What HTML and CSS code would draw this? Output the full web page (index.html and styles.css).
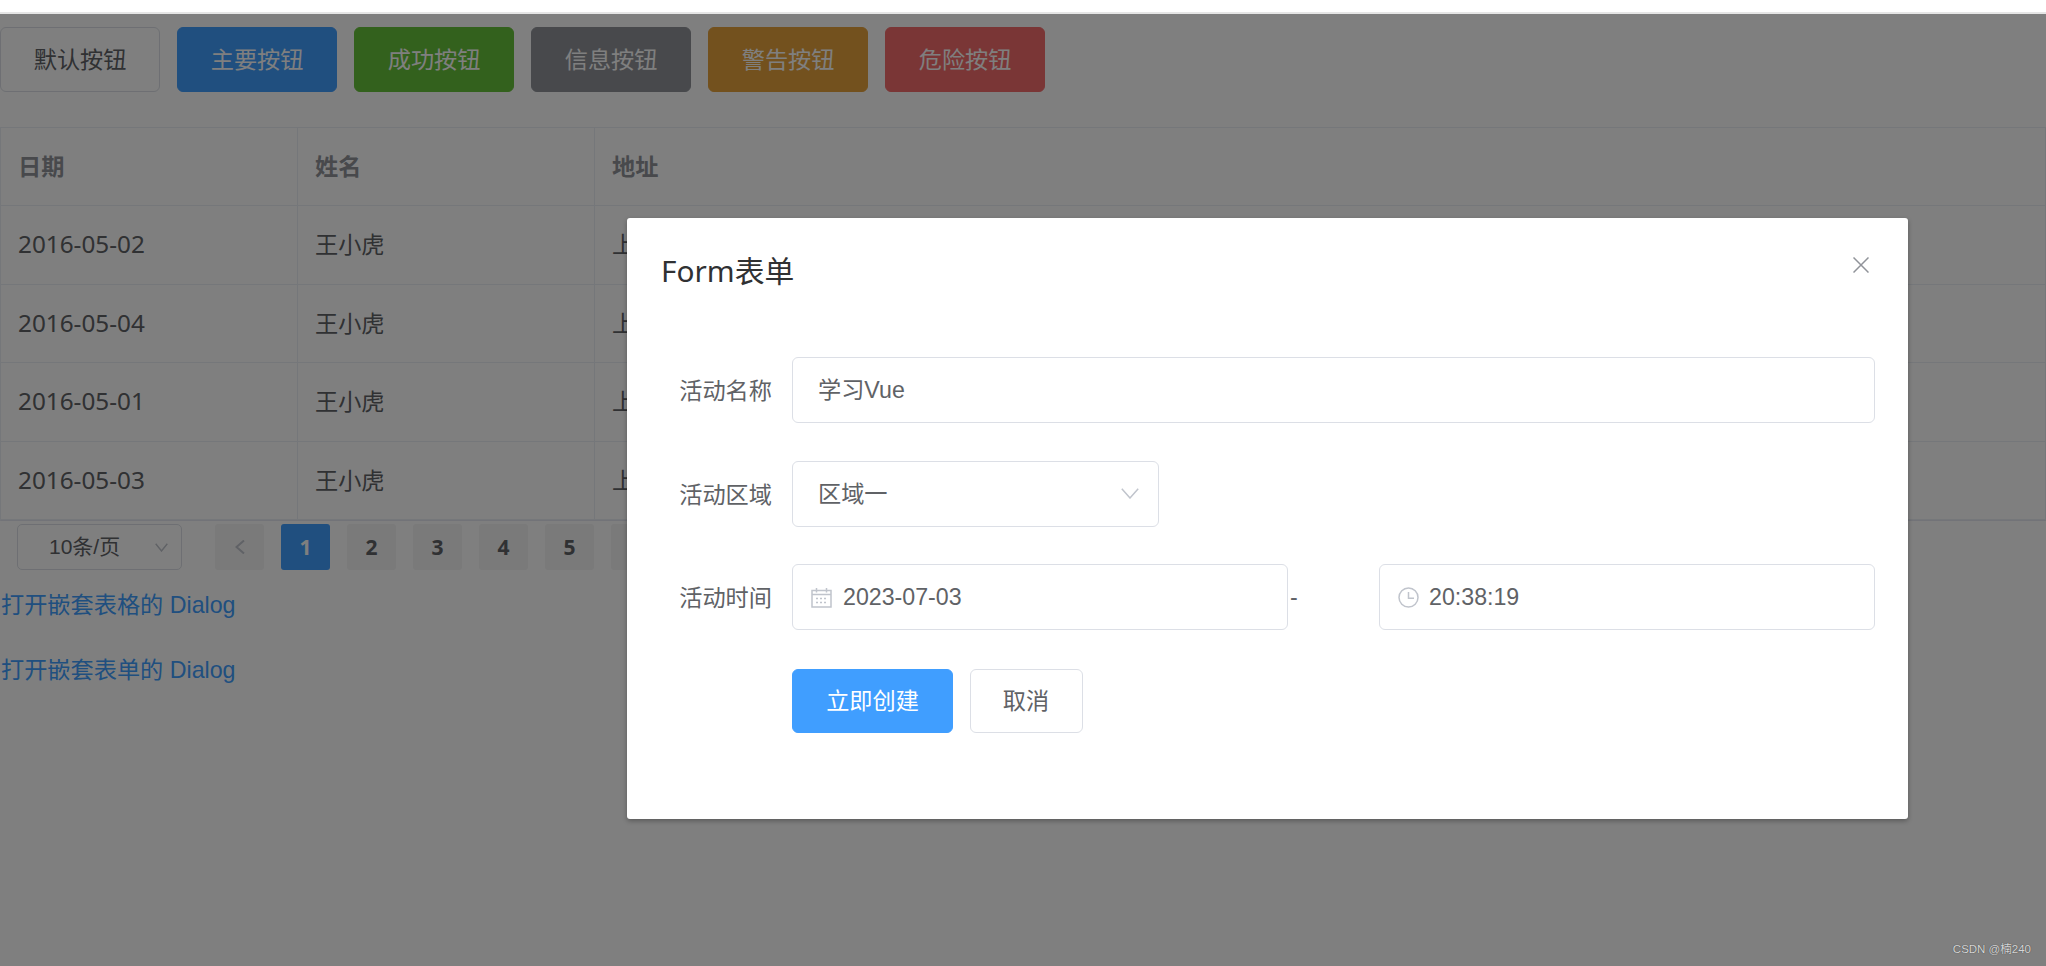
FILE: index.html
```html
<!DOCTYPE html>
<html lang="zh-CN">
<head>
<meta charset="utf-8">
<title>Form表单</title>
<link rel="stylesheet" href="styles.css">
</head>
<body>
<div class="topbar"></div>
<main class="page">
  <div class="content">
    <div class="btn-row">
      <button class="btn">默认按钮</button>
      <button class="btn btn-primary">主要按钮</button>
      <button class="btn btn-success">成功按钮</button>
      <button class="btn btn-info">信息按钮</button>
      <button class="btn btn-warning">警告按钮</button>
      <button class="btn btn-danger">危险按钮</button>
    </div>
    <table class="table">
      <colgroup><col class="col-date"><col class="col-name"><col></colgroup>
      <thead>
        <tr><th>日期</th><th>姓名</th><th>地址</th></tr>
      </thead>
      <tbody>
        <tr><td class="date">2016-05-02</td><td>王小虎</td><td>上海市普陀区金沙江路 1518 弄</td></tr>
        <tr><td class="date">2016-05-04</td><td>王小虎</td><td>上海市普陀区金沙江路 1517 弄</td></tr>
        <tr><td class="date">2016-05-01</td><td>王小虎</td><td>上海市普陀区金沙江路 1519 弄</td></tr>
        <tr><td class="date">2016-05-03</td><td>王小虎</td><td>上海市普陀区金沙江路 1516 弄</td></tr>
      </tbody>
    </table>
    <nav class="pager">
      <div class="page-size">
        <span>10条/页</span>
        <svg class="page-size-arrow" viewBox="0 0 13 9"><path d="M.7.7 6.500 8 12.300.7"/></svg>
      </div>
      <div class="page-list">
        <span class="page-btn page-prev"><svg class="prev-icon" viewBox="0 0 10 14"><path d="M9 .5 1.500 7 9 13.500"/></svg></span>
        <span class="page-btn page-active">1</span>
        <span class="page-btn">2</span>
        <span class="page-btn">3</span>
        <span class="page-btn">4</span>
        <span class="page-btn">5</span>
        <span class="page-btn">6</span>
      </div>
    </nav>
    <div class="links">
      <a class="link">打开嵌套表格的 Dialog</a>
      <a class="link">打开嵌套表单的 Dialog</a>
    </div>
  </div>

  <div class="overlay">
    <section class="dialog">
      <header class="dialog-header">
        <h2 class="dialog-title">Form表单</h2>
        <svg class="dialog-close" viewBox="0 0 16 16"><path d="M.5.500 15.500 15.500M15.500.500.500 15.500"/></svg>
      </header>
      <form class="form">
        <div class="form-row">
          <label class="form-label">活动名称</label>
          <div class="field field-full"><span class="field-text">学习Vue</span></div>
        </div>
        <div class="form-row">
          <label class="form-label">活动区域</label>
          <div class="field field-select">
            <span class="field-text">区域一</span>
            <svg class="select-arrow" viewBox="0 0 18 11"><path d="M.8.8 9 10 17.200.8"/></svg>
          </div>
        </div>
        <div class="form-row">
          <label class="form-label">活动时间</label>
          <div class="date-grid">
            <div class="field field-icon">
              <svg class="field-svg" viewBox="0 0 21 21"><path d="M1 3.500h19v16.500H1zM1 7.500h19M5.500 1v4.500M15.500 1v4.500"/><path class="dots" d="M5 11.500h11M5 15.500h11"/></svg>
              <span>2023-07-03</span>
            </div>
            <span class="date-sep">-</span>
            <div class="field field-icon field-time">
              <svg class="field-svg" viewBox="0 0 21 21"><circle cx="10.500" cy="10.500" r="9.500"/><path d="M10.500 5v6.200h5.500"/></svg>
              <span>20:38:19</span>
            </div>
          </div>
        </div>
        <div class="form-row form-actions">
          <button class="btn btn-primary btn-create" type="button">立即创建</button>
          <button class="btn btn-cancel" type="button">取消</button>
        </div>
      </form>
    </section>
  </div>
  <div class="watermark">CSDN @楠240</div>
</main>
</body>
</html>
```
FILE: styles.css
```css
* { box-sizing: border-box; }
html, body { margin: 0; padding: 0; height: 966px; overflow: hidden; background: #fff; }
body { font-family: "Noto Sans", "Noto Sans CJK SC", sans-serif; font-size: 23.200px; color: #606266; }

.topbar { height: 14px; background: #fff; border-bottom: 2px solid #e5e5e5; }
.page { position: relative; height: 952px; overflow: hidden; }
.content { padding-top: 13px; }

.btn-row { display: flex; gap: 16.750px; }
.btn {
  width: 160.250px; height: 65px; padding: 0 0 3px; margin: 0;
  border: 1px solid #dcdfe6; border-radius: 6px;
  background: #fff; color: #606266;
  font-family: "Noto Sans CJK SC", sans-serif; font-size: 23.200px; line-height: 30px;
}
.btn-primary { background: #409eff; border-color: #409eff; color: #fff; }
.btn-success { background: #67c23a; border-color: #67c23a; color: #fff; }
.btn-info { background: #909399; border-color: #909399; color: #fff; }
.btn-warning { background: #e6a23c; border-color: #e6a23c; color: #fff; }
.btn-danger { background: #f56c6c; border-color: #f56c6c; color: #fff; }

.table {
  width: 100%; margin-top: 35px; table-layout: fixed;
  border-collapse: separate; border-spacing: 0;
  border-top: 1px solid #ebeef5; border-left: 1px solid #ebeef5;
  border-bottom: 1px solid #e4e7f0;
}
.col-date, .col-name { width: 297px; }
.table th, .table td {
  height: 78.500px; padding: 0 17px 1px;
  text-align: left; white-space: nowrap; overflow: hidden;
  border-bottom: 1px solid #ebeef5; border-right: 1px solid #ebeef5;
  line-height: 30px; font-weight: 400;
}
.table th { height: 78px; padding-bottom: 2px; font-weight: 700; color: #909399; }
.table td.date { font-size: 24.300px; }

.pager { display: flex; margin-top: 3px; padding-left: 17px; height: 46px; }
.page-size {
  display: flex; align-items: center; justify-content: space-between;
  width: 165px; height: 46px; padding: 0 13px 0 31px;
  border: 1px solid #dcdfe6; border-radius: 5px;
  font-family: "Liberation Sans", "Noto Sans CJK SC", sans-serif; font-size: 21px; line-height: 28px;
}
.page-size-arrow { width: 13px; height: 9px; fill: none; stroke: #c0c4cc; stroke-width: 1.400; }
.page-list { display: flex; gap: 17px; margin-left: 33px; }
.page-btn {
  display: flex; align-items: center; justify-content: center;
  width: 49px; height: 46px; border-radius: 3px;
  background: #f4f4f5; font-size: 21px; font-weight: 700; color: #606266;
}
.page-active { background: #409eff; color: #fff; }
.prev-icon { width: 10px; height: 14px; fill: none; stroke: #c0c4cc; stroke-width: 2; }

.links { display: flex; flex-direction: column; gap: 34.670px; margin-top: 20px; padding-left: 1px; }
.link {
  display: block; height: 30px; line-height: 30px; color: #409eff;
  font-family: "Liberation Sans", "Noto Sans CJK SC", sans-serif;
}

.overlay { position: absolute; inset: 0; background: rgba(0, 0, 0, .5); }
.dialog {
  width: 1281px; height: 601px; margin: 204px 0 0 627px;
  padding: 0 33px 0 34px;
  background: #fff; border-radius: 3px;
  box-shadow: 0 2px 5px rgba(0, 0, 0, .3);
  font-family: "Liberation Sans", "Noto Sans CJK SC", sans-serif;
}
.dialog-header { position: relative; height: 139px; padding-top: 32px; }
.dialog-title {
  margin: 0; font-family: "Noto Sans", "Noto Sans CJK SC", sans-serif;
  font-size: 29.800px; font-weight: 400; line-height: 42px; color: #303133;
}
.dialog-close {
  position: absolute; top: 39px; right: 6px; width: 16px; height: 16px;
  fill: none; stroke: #909399; stroke-width: 1.500;
}

.form { display: flex; flex-direction: column; gap: 37.500px; }
.form-row { display: flex; align-items: center; min-height: 66px; }
.form-label {
  flex: none; width: 131px; padding: 0 20px 2px 0; text-align: right;
  font-family: "Noto Sans CJK SC", sans-serif; line-height: 30px;
}
.field {
  display: flex; align-items: center; height: 66px;
  border: 1px solid #dcdfe6; border-radius: 6px; background: #fff; line-height: 30px;
}
.field-full { flex: 1; padding-left: 25px; }
.field-select { width: 367px; padding: 0 19px 0 25px; justify-content: space-between; }
.select-arrow { width: 18px; height: 11px; fill: none; stroke: #c0c4cc; stroke-width: 1.500; }
.date-grid { flex: 1; display: grid; grid-template-columns: 496px 1fr 496px; align-items: center; }
.date-sep { padding-left: 2px; line-height: 30px; }
.field-icon { padding-left: 18px; gap: 11px; }
.field-time { gap: 10px; }
.field-svg { flex: none; width: 21px; height: 21px; fill: none; stroke: #c0c4cc; stroke-width: 1.500; }
.field-svg .dots { stroke-dasharray: 2 2; stroke-width: 1.500; }
.form-actions { padding-left: 131px; gap: 16.500px; margin-top: .5px; }
.btn-create { width: 161px; height: 64px; padding-bottom: 4px; }
.btn-cancel { width: 113px; height: 64px; padding-bottom: 4px; }

.watermark {
  position: absolute; right: 15px; bottom: 9px;
  font-family: "Liberation Sans", "Noto Sans CJK SC", sans-serif; font-size: 11.500px; line-height: 16px;
  color: #d6d6d6; text-shadow: 0 0 1px #333;
}
```
